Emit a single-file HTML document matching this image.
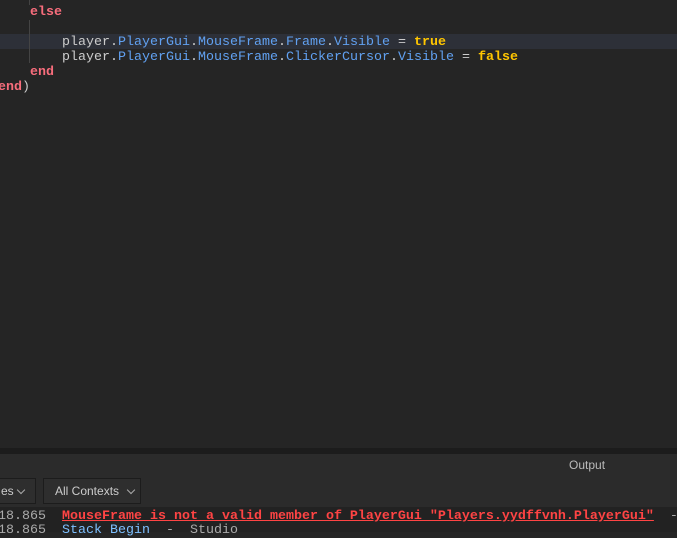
<!DOCTYPE html>
<html><head><style>
*{margin:0;padding:0;box-sizing:border-box}
body{width:677px;height:532px;background:#252525;overflow:hidden;position:relative;font-family:"Liberation Mono",monospace;font-size:13.33px}
.l{position:absolute;left:0;height:15px;line-height:15px;white-space:pre;color:#ccc}
.k{color:#f86d7c;font-weight:bold}
.m{color:#61a1f1}
.b{color:#ffc600;font-weight:bold}
.g{position:absolute;width:1px;background:#444}
.sel{position:absolute;left:0;top:34px;width:677px;height:15px;background:#2d3038}
.dd{position:absolute;top:478px;height:26px;background:#2e2e2e;border:1px solid #1c1c1c;font-family:"Liberation Sans",sans-serif;font-size:12px;color:#ccc;line-height:24px}
.chev{position:absolute;top:8px;width:6px;height:6px;border-right:1.5px solid #aaa;border-bottom:1.5px solid #aaa;transform:rotate(45deg)}
</style></head><body>
<div class="sel"></div>
<div class="g" style="left:29px;top:0;height:5px"></div>
<div class="g" style="left:29px;top:20px;height:43px"></div>
<div class="l" style="top:5px;left:30px"><span class="k">else</span></div>
<div class="l" style="top:35px;left:62px">player.<span class="m">PlayerGui</span>.<span class="m">MouseFrame</span>.<span class="m">Frame</span>.<span class="m">Visible</span> = <span class="b">true</span></div>
<div class="l" style="top:50px;left:62px">player.<span class="m">PlayerGui</span>.<span class="m">MouseFrame</span>.<span class="m">ClickerCursor</span>.<span class="m">Visible</span> = <span class="b">false</span></div>
<div class="l" style="top:65px;left:30px"><span class="k">end</span></div>
<div class="l" style="top:80px;left:-2px"><span class="k">end</span>)</div>
<div style="position:absolute;left:0;top:448px;width:677px;height:6px;background:#1c1c1c"></div>
<div style="position:absolute;left:0;top:454px;width:677px;height:53px;background:#2b2b2b"></div>
<div style="position:absolute;left:569px;top:458px;font-family:'Liberation Sans',sans-serif;font-size:12px;color:#bbb">Output</div>
<div class="dd" style="left:-10px;width:46px"><span style="padding-left:10px">es</span><span class="chev" style="left:27px"></span></div>
<div class="dd" style="left:43px;width:98px"><span style="padding-left:11px">All Contexts</span><span class="chev" style="left:84px"></span></div>
<div style="position:absolute;left:0;top:507px;width:677px;height:25px;background:#222"></div>
<div class="l" style="top:509px;left:-2px;color:#aaa">18.865  <span style="color:#ff4444;font-weight:bold;text-decoration:underline">MouseFrame is not a valid member of PlayerGui "Players.yydffvnh.PlayerGui"</span>  -</div>
<div class="l" style="top:523px;left:-2px;color:#aaa">18.865  <span style="color:#7ec0ff">Stack Begin</span>  -  Studio</div>
</body></html>
